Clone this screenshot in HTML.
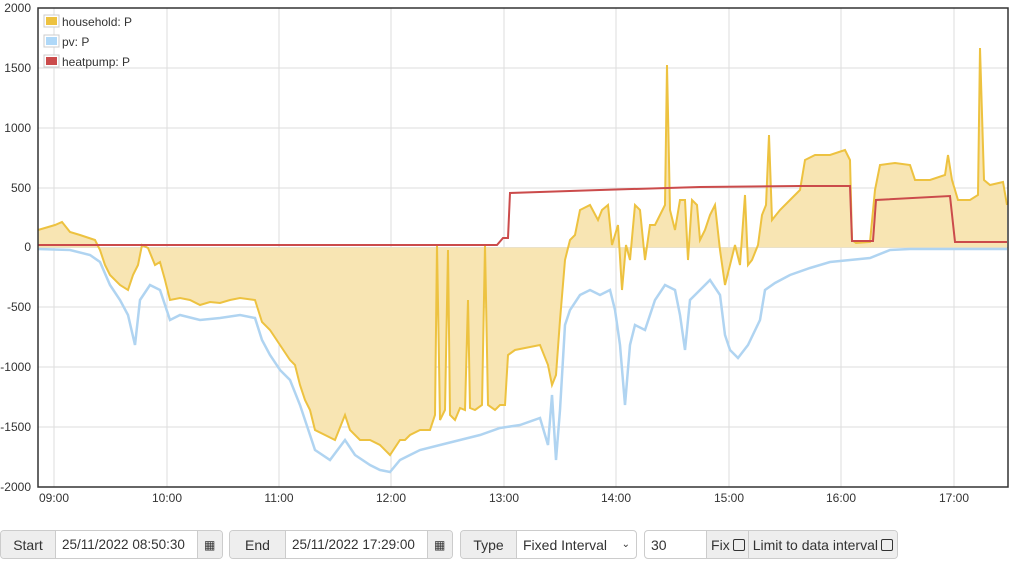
<!DOCTYPE html>
<html><head><meta charset="utf-8"><style>
body{margin:0;width:1024px;height:563px;background:#fff;font-family:"Liberation Sans",sans-serif;overflow:hidden;position:relative}
.g{position:absolute;top:530px;height:27px;display:flex;border:1px solid #ccc;border-radius:4px;font-size:14px;color:#333;overflow:hidden;white-space:nowrap}
.g>div{display:flex;align-items:center;padding:0 6px;border-right:1px solid #ccc;white-space:nowrap}
.g>div:last-child{border-right:none}
.a{background:#eee}
.cb{display:inline-block;width:10px;height:10px;border:1px solid #333;margin-left:3px;border-radius:2px}
</style></head><body>
<svg width="1024" height="520" style="position:absolute;left:0;top:0" font-family="Liberation Sans" font-size="12" fill="#333">
<g stroke="#ddd" stroke-width="1">
<line x1="38" x2="1008" y1="68" y2="68"/><line x1="38" x2="1008" y1="128" y2="128"/><line x1="38" x2="1008" y1="188" y2="188"/><line x1="38" x2="1008" y1="247.5" y2="247.5"/><line x1="38" x2="1008" y1="307" y2="307"/><line x1="38" x2="1008" y1="367" y2="367"/><line x1="38" x2="1008" y1="427" y2="427"/>
<line x1="54" x2="54" y1="8" y2="487"/><line x1="167" x2="167" y1="8" y2="487"/><line x1="279" x2="279" y1="8" y2="487"/><line x1="391" x2="391" y1="8" y2="487"/><line x1="504" x2="504" y1="8" y2="487"/><line x1="616" x2="616" y1="8" y2="487"/><line x1="729" x2="729" y1="8" y2="487"/><line x1="841" x2="841" y1="8" y2="487"/><line x1="954" x2="954" y1="8" y2="487"/>
</g>
<polygon fill="#f8e5b3" points="38,247.5 38,230 55,225 62,222 70,232 80,235 95,240 100,250 105,265 110,275 120,285 128,290 133,275 138,265 142,245 148,248 155,265 160,262 165,280 170,300 180,298 190,300 200,305 210,302 220,303 230,300 240,298 255,300 262,322 270,330 280,345 290,360 295,365 300,385 305,400 310,410 315,430 325,435 335,440 345,415 350,430 360,440 370,440 380,445 390,455 400,440 405,440 410,435 420,430 430,430 435,415 437,245 440,420 445,410 448,250 450,415 455,420 460,408 465,410 468,300 470,408 475,410 482,405 485,245 488,405 495,410 500,405 505,405 508,355 515,350 525,348 540,345 548,365 552,385 556,375 560,320 565,260 570,240 575,235 580,210 590,205 598,220 602,210 608,205 612,245 618,225 622,290 626,245 630,260 635,205 640,210 645,260 650,225 655,225 660,215 665,205 667,65 670,210 675,230 680,200 685,200 688,260 692,200 697,205 700,240 705,230 710,215 715,205 720,250 725,285 730,265 735,245 740,265 745,195 748,265 752,260 758,245 762,215 766,205 769,135 772,220 780,210 790,200 800,190 805,160 815,155 830,155 845,150 850,160 852,240 856,243 870,242 875,190 880,165 895,163 910,165 915,180 930,180 945,175 948,155 952,180 958,200 970,200 978,195 980,48 984,180 990,185 1003,182 1007,205 1007,247.5"/>
<polyline fill="none" stroke="#b0d4f1" stroke-width="2.5" points="38,249 70,250 90,255 100,262 110,285 120,300 128,315 135,345 140,300 150,285 160,290 170,320 180,315 200,320 220,318 240,315 255,318 262,340 270,355 280,370 290,380 300,405 305,420 315,450 330,460 345,440 355,455 370,465 380,470 390,472 400,460 410,455 420,450 440,445 460,440 480,435 500,428 520,425 540,418 548,445 552,395 556,460 560,410 565,325 570,310 580,295 590,290 600,295 610,290 615,310 620,345 625,405 630,345 635,325 645,330 655,300 665,285 675,290 680,315 685,350 690,300 700,290 710,280 720,295 725,335 730,350 738,358 748,345 760,320 765,290 775,283 790,275 810,268 830,262 850,260 870,258 890,250 910,249 1007,249"/>
<polyline fill="none" stroke="#edc240" stroke-width="2" points="38,230 55,225 62,222 70,232 80,235 95,240 100,250 105,265 110,275 120,285 128,290 133,275 138,265 142,245 148,248 155,265 160,262 165,280 170,300 180,298 190,300 200,305 210,302 220,303 230,300 240,298 255,300 262,322 270,330 280,345 290,360 295,365 300,385 305,400 310,410 315,430 325,435 335,440 345,415 350,430 360,440 370,440 380,445 390,455 400,440 405,440 410,435 420,430 430,430 435,415 437,245 440,420 445,410 448,250 450,415 455,420 460,408 465,410 468,300 470,408 475,410 482,405 485,245 488,405 495,410 500,405 505,405 508,355 515,350 525,348 540,345 548,365 552,385 556,375 560,320 565,260 570,240 575,235 580,210 590,205 598,220 602,210 608,205 612,245 618,225 622,290 626,245 630,260 635,205 640,210 645,260 650,225 655,225 660,215 665,205 667,65 670,210 675,230 680,200 685,200 688,260 692,200 697,205 700,240 705,230 710,215 715,205 720,250 725,285 730,265 735,245 740,265 745,195 748,265 752,260 758,245 762,215 766,205 769,135 772,220 780,210 790,200 800,190 805,160 815,155 830,155 845,150 850,160 852,240 856,243 870,242 875,190 880,165 895,163 910,165 915,180 930,180 945,175 948,155 952,180 958,200 970,200 978,195 980,48 984,180 990,185 1003,182 1007,205"/>
<polyline fill="none" stroke="#cb4b4b" stroke-width="2" points="38,245 497,245 503,238 508,238 510,193 600,190 700,187 800,186 850,186 852,241 873,241 876,200 950,196 955,242 1007,242"/>
<rect x="38" y="8" width="970" height="479" fill="none" stroke="#333" stroke-width="1.5"/>
<g text-anchor="end">
<text x="31" y="12">2000</text><text x="31" y="72">1500</text><text x="31" y="132">1000</text><text x="31" y="192">500</text><text x="31" y="251">0</text><text x="31" y="311">-500</text><text x="31" y="371">-1000</text><text x="31" y="431">-1500</text><text x="31" y="491">-2000</text>
</g>
<g text-anchor="middle">
<text x="54" y="502">09:00</text><text x="167" y="502">10:00</text><text x="279" y="502">11:00</text><text x="391" y="502">12:00</text><text x="504" y="502">13:00</text><text x="616" y="502">14:00</text><text x="729" y="502">15:00</text><text x="841" y="502">16:00</text><text x="954" y="502">17:00</text>
</g>
<rect x="44" y="15" width="15" height="12" fill="#fff" stroke="#ccc"/><rect x="46" y="17" width="11" height="8" fill="#edc240"/>
<rect x="44" y="35" width="15" height="12" fill="#fff" stroke="#ccc"/><rect x="46" y="37" width="11" height="8" fill="#afd8f8"/>
<rect x="44" y="55" width="15" height="12" fill="#fff" stroke="#ccc"/><rect x="46" y="57" width="11" height="8" fill="#cb4b4b"/>
<text x="62" y="26">household: P</text><text x="62" y="46">pv: P</text><text x="62" y="66">heatpump: P</text>
</svg>
<div class="g" style="left:0;width:221px"><div class="a" style="width:42px;justify-content:center;padding:0 6px">Start</div><div style="flex:1;font-size:13.5px">25/11/2022 08:50:30</div><div class="a" style="width:12px;padding:0 6px;font-size:12px">▦</div></div>
<div class="g" style="left:229px;width:222px"><div class="a" style="width:43px;justify-content:center">End</div><div style="flex:1;font-size:13.5px">25/11/2022 17:29:00</div><div class="a" style="width:12px;font-size:12px">▦</div></div>
<div class="g" style="left:460px;width:175px"><div class="a" style="width:43px;justify-content:center">Type</div><div style="flex:1;justify-content:space-between">Fixed Interval<span style="font-size:10px">⌄</span></div></div>
<div class="g" style="left:644px;width:252px"><div style="width:56px">30</div><div class="a" style="padding:0 3px 0 4px">Fix<span class="cb"></span></div><div class="a" style="padding:0 4px;flex:1">Limit to data interval<span class="cb"></span></div></div>
</body></html>
